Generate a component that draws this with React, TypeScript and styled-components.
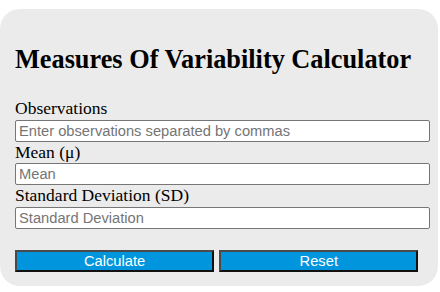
import { createGlobalStyle, styled } from 'styled-components';

const GlobalStyle = createGlobalStyle`
  body {
    margin: 0;
    background: #ffffff;
    font-family: 'Liberation Serif', 'Times New Roman', serif;
    color: #000000;
  }
`;

const Page = styled.div`
  padding-top: 9px;
`;

const Card = styled.div`
  box-sizing: border-box;
  width: 438px;
  height: 277px;
  padding: 20px 8px 0 15px;
  background-color: #ebebeb;
  border-radius: 20px;
`;

const Title = styled.h2`
  margin: 16px 0 23px;
  font-size: 26.3px;
  line-height: 30px;
  font-weight: bold;
`;

const Field = styled.div`
  display: flex;
  flex-direction: column;
`;

const Label = styled.label`
  font-size: 17.5px;
  line-height: 21.5px;
`;

const Input = styled.input`
  box-sizing: border-box;
  width: 100%;
  height: 22px;
  padding: 0 3px;
  border: 1px solid #767676;
  border-radius: 2px;
  background: #ffffff;
  font-family: 'Liberation Sans', Arial, sans-serif;
  font-size: 14.7px;

  &::placeholder {
    color: #757575;
  }
`;

const Buttons = styled.div`
  display: flex;
  gap: 5px;
  margin-top: 21.5px;
`;

const Button = styled.button`
  box-sizing: border-box;
  width: 48%;
  height: 22px;
  padding: 0;
  background-color: #0095dd;
  border-style: solid;
  border-width: 2px;
  border-color: #4a4a4a #111111 #111111 #4a4a4a;
  color: #ffffff;
  font-family: 'Liberation Sans', Arial, sans-serif;
  font-size: 14.7px;
  cursor: pointer;
`;

const fields = [
  { id: 'observations', label: 'Observations', placeholder: 'Enter observations separated by commas' },
  { id: 'mean', label: 'Mean (μ)', placeholder: 'Mean' },
  { id: 'sd', label: 'Standard Deviation (SD)', placeholder: 'Standard Deviation' },
];

export default function App() {
  return (
    <>
      <GlobalStyle />
      <Page>
        <Card>
          <Title>Measures Of Variability Calculator</Title>
          {fields.map((f) => (
            <Field key={f.id}>
              <Label htmlFor={f.id}>{f.label}</Label>
              <Input id={f.id} type="text" placeholder={f.placeholder} />
            </Field>
          ))}
          <Buttons>
            <Button type="button">Calculate</Button>
            <Button type="button">Reset</Button>
          </Buttons>
        </Card>
      </Page>
    </>
  );
}
